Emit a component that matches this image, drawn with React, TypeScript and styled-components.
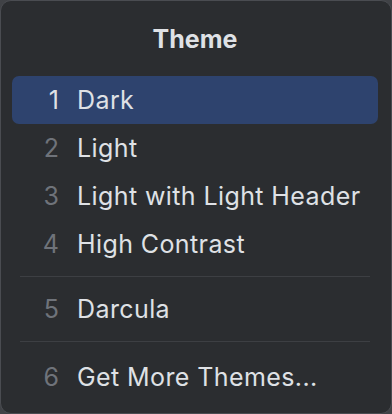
import styled, { createGlobalStyle } from 'styled-components'

const GlobalStyle = createGlobalStyle`
  html, body {
    margin: 0;
    padding: 0;
    background-color: #404246;
  }
  body {
    font-family: Inter, 'Noto Sans', sans-serif;
  }
`

const Popup = styled.div`
  box-sizing: border-box;
  width: 392px;
  height: 414px;
  background-color: #2b2d30;
  border: 1px solid #4a4c51;
  border-radius: 11px;
  padding: 0 13px 0 11px;
  display: flex;
  flex-direction: column;
`

const Title = styled.div`
  color: #dfe1e5;
  font-size: 25px;
  font-weight: 700;
  text-align: center;
  height: 75px;
  line-height: 77px;
`

const Item = styled.div<{ $selected?: boolean }>`
  display: flex;
  align-items: center;
  height: 48px;
  border-radius: 7px;
  background-color: ${(p) => (p.$selected ? '#2e436e' : 'transparent')};
`

const Num = styled.span<{ $selected?: boolean }>`
  width: 47px;
  text-align: right;
  color: ${(p) => (p.$selected ? '#dfe1e5' : '#6f737a')};
  font-size: 25px;
`

const Label = styled.span`
  margin-left: 18px;
  color: #dfe1e5;
  font-size: 25px;
  letter-spacing: 0.4px;
  white-space: nowrap;
`

const Divider = styled.div<{ $after?: number }>`
  height: 1px;
  background-color: #3d3f43;
  margin: 8px 8px ${(p) => p.$after ?? 8}px 8px;
`

const themes = [
  { n: 1, label: 'Dark', selected: true },
  { n: 2, label: 'Light' },
  { n: 3, label: 'Light with Light Header' },
  { n: 4, label: 'High Contrast' },
]

const App = () => (
  <>
    <GlobalStyle />
    <Popup>
      <Title>Theme</Title>
      {themes.map((t) => (
        <Item key={t.n} $selected={t.selected}>
          <Num $selected={t.selected}>{t.n}</Num>
          <Label>{t.label}</Label>
        </Item>
      ))}
      <Divider />
      <Item>
        <Num>5</Num>
        <Label>Darcula</Label>
      </Item>
      <Divider $after={11} />
      <Item>
        <Num>6</Num>
        <Label>Get More Themes...</Label>
      </Item>
    </Popup>
  </>
)

export default App
